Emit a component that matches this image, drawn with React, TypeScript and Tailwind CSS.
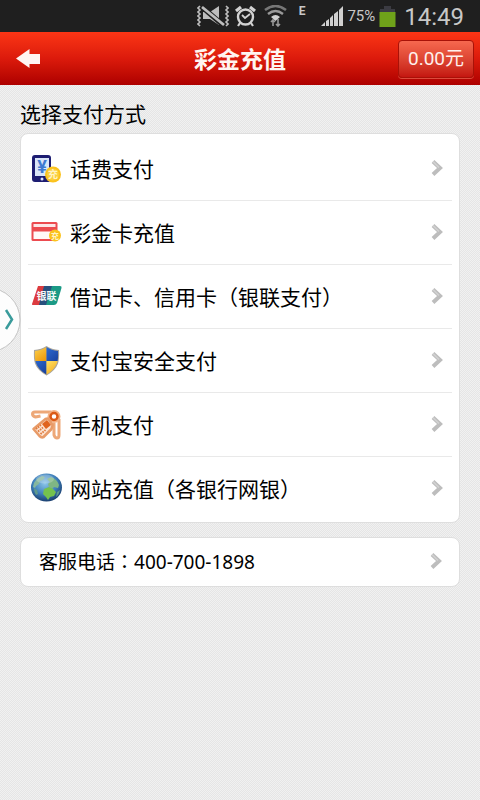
import type { ReactNode } from "react";

const sans = "font-['Roboto','Noto_Sans_CJK_SC',sans-serif]";

function MuteIcon() {
  return (
    <svg width="32" height="22" viewBox="0 0 32 22" fill="none" aria-hidden="true">
      <path d="M3 1l-2 2 2 2-2 2 2 2-2 2 2 2-2 2 2 2-2 2 2 2M29 1l2 2-2 2 2 2-2 2 2 2-2 2 2 2-2 2 2 2-2 2" stroke="#bdbdbd" strokeWidth="1.6" />
      <path d="M6 7h7l9-6v19l-9-6H6z" fill="#bdbdbd" />
      <path d="M5 2l21 18" stroke="#1f1f1f" strokeWidth="5" />
      <path d="M5 2l22 18" stroke="#bdbdbd" strokeWidth="2.8" />
    </svg>
  );
}

function AlarmIcon() {
  return (
    <svg width="21" height="22" viewBox="0 0 21 22" fill="none" stroke="#d2d2d2" aria-hidden="true">
      <circle cx="10.500" cy="12" r="7.500" strokeWidth="2.400" />
      <path d="M7 10l3 3 5-4" strokeWidth="1.800" />
      <path d="M1 6l5-4M20 6l-5-4" strokeWidth="3.200" />
      <path d="M5 18l-2 3M16 18l2 3" strokeWidth="2.200" />
    </svg>
  );
}

function WifiIcon() {
  return (
    <svg width="23" height="22" viewBox="0 0 23 22" fill="none" aria-hidden="true">
      <path d="M1 5q10.500-8 21 0" stroke="#777" strokeWidth="2.600" />
      <path d="M4 9q7.500-6 15 0" stroke="#999" strokeWidth="2.400" />
      <path d="M7 12q4.500-4 9 0l-4.500 4z" fill="#d0d0d0" />
      <path d="M9 21v-6M7 17l2-2 2 2M14 14v7M12 19l2 2 2-2" stroke="#999" strokeWidth="1.600" />
    </svg>
  );
}

function SignalIcon() {
  return (
    <svg width="22" height="20" viewBox="0 0 22 20" fill="#d0d0d0" aria-hidden="true">
      <path d="M0 20l4-4v4zM5 15l3-2v7H5zM9 12l3-3v11H9zM13 8l4-3v15h-4zM18 4l4-4v20h-4z" />
    </svg>
  );
}

function BatteryIcon() {
  return (
    <svg width="17" height="23" viewBox="0 0 17 23" aria-hidden="true">
      <path d="M5 1h7v3h4v3H1V4h4z" fill="#3b3b42" />
      <path d="M0.500 7h16v15h-16z" fill="#6fa21a" />
    </svg>
  );
}

function Chevron() {
  return (
    <svg width="14" height="18" viewBox="0 0 14 18" fill="none" className="shrink-0" aria-hidden="true">
      <path d="M3 1.500l7 6.500-7 6.500" stroke="#bdbdbd" strokeWidth="4" />
      <path d="M3 1.500l6 6" stroke="#d2d2d2" strokeWidth="1.500" />
    </svg>
  );
}

function PhoneYuanIcon() {
  return (
    <svg width="32" height="32" viewBox="0 0 32 32" aria-hidden="true">
      <rect x="1" y="2" width="19" height="27" rx="3" fill="#1d1d72" />
      <rect x="4" y="5" width="14" height="18" fill="#d9e5f8" />
      <text x="11" y="20" textAnchor="middle" fontSize="18" fontWeight="700" fill="#3f79d0">¥</text>
      <circle cx="11" cy="26" r="1.500" fill="#dfe4ff" />
      <circle cx="22" cy="21.500" r="8" fill="#fbc21d" />
      <circle cx="22" cy="21.500" r="6" fill="#fccf3c" />
      <text x="22" y="25" textAnchor="middle" fontSize="10" fontWeight="700" fill="#fff3c4">充</text>
    </svg>
  );
}

function CardIcon() {
  return (
    <svg width="32" height="32" viewBox="0 0 32 32" aria-hidden="true">
      <rect x="0.500" y="5" width="26" height="19" rx="1.500" fill="#ec4b50" />
      <rect x="2.500" y="7" width="22" height="3" fill="#fde7e7" />
      <rect x="2.500" y="14.500" width="22" height="7.500" fill="#fff8f8" />
      <circle cx="24" cy="18.500" r="6" fill="#fbc21d" />
      <text x="24" y="21.500" textAnchor="middle" fontSize="8" fontWeight="700" fill="#fff3c4">充</text>
    </svg>
  );
}

function UnionPayIcon() {
  return (
    <svg width="32" height="32" viewBox="0 0 32 32" aria-hidden="true">
      <path d="M7 5h12l-5 19H2q-1.500 0-1-1z" fill="#dc3b3f" />
      <path d="M13 5h11l-5 19H8z" fill="#28507e" />
      <path d="M21 5h8q2 0 1.500 2L26 22q-1 2-3 2h-8z" fill="#1b9a86" />
      <text x="15.500" y="19" textAnchor="middle" fontSize="10" fontWeight="700" fill="#f4fafa">银联</text>
    </svg>
  );
}

function ShieldIcon() {
  return (
    <svg width="32" height="32" viewBox="0 0 32 32" aria-hidden="true">
      <defs>
        <linearGradient id="shieldGold" x1="0" y1="0" x2="0.800" y2="1">
          <stop offset="0" stopColor="#ffe164" />
          <stop offset="1" stopColor="#ee9b0c" />
        </linearGradient>
        <linearGradient id="shieldBlue" x1="0" y1="0" x2="1" y2="1">
          <stop offset="0" stopColor="#2f6fd6" />
          <stop offset="1" stopColor="#163a94" />
        </linearGradient>
        <clipPath id="shieldShape">
          <path d="M15.500 2q5 3.500 11.500 4 .500 8-1 12-2.500 7-10.500 11.500Q7.500 25 5 18 3.500 14 4 6q6.500-.500 11.500-4z" />
        </clipPath>
      </defs>
      <path d="M15.500 1q5 3.500 12.500 4 .500 9-1 13.500-2.500 7-11.500 12Q6.500 25.500 4 18.500 2.500 14 3 5q7.500-.500 12.500-4z" fill="#a9a59c" />
      <g clipPath="url(#shieldShape)">
        <path d="M0 0h15.500v16H0z" fill="url(#shieldGold)" />
        <path d="M15.500 0H32v16H15.500z" fill="url(#shieldBlue)" />
        <path d="M0 16h15.500v16H0z" fill="url(#shieldBlue)" />
        <path d="M15.500 16H32v16H15.500z" fill="url(#shieldGold)" />
      </g>
    </svg>
  );
}

function MobilePayIcon() {
  return (
    <svg width="32" height="32" viewBox="0 0 32 32" fill="none" aria-hidden="true">
      <path d="M20 3H4Q1.500 3 1.500 5t3 3l5-1" stroke="#eda878" strokeWidth="3" strokeLinejoin="round" />
      <path d="M28 10v16q0 3-2 3t-3-3V14" stroke="#eda878" strokeWidth="3" strokeLinejoin="round" />
      <circle cx="23" cy="7.500" r="6.500" fill="#f3b184" />
      <circle cx="23" cy="7.500" r="3.500" fill="#fff" stroke="#db5a16" strokeWidth="2.500" />
      <path d="M2.500 20l12-10q2-1 3 0l4 6-1 4-8 8q-2 1-4-1z" fill="#fbe3d2" stroke="#e89b68" strokeWidth="2.600" strokeLinejoin="round" />
      <path d="M11 15l5-4 4 5-5 4z" fill="#e0641f" />
      <path d="M5 20l5-4M7 22.500l5-4M9.500 25l5-4" stroke="#e07a3c" strokeWidth="1.800" strokeDasharray="1.600 0.900" />
    </svg>
  );
}

function GlobeIcon() {
  return (
    <svg width="32" height="32" viewBox="0 0 32 32" aria-hidden="true">
      <defs>
        <radialGradient id="ocean" cx="0.450" cy="0.350" r="0.650">
          <stop offset="0" stopColor="#8cc6ea" />
          <stop offset="0.600" stopColor="#3f80ba" />
          <stop offset="1" stopColor="#1a3f70" />
        </radialGradient>
      </defs>
      <ellipse cx="15.500" cy="14.500" rx="15.500" ry="14" fill="url(#ocean)" />
      <path d="M3 10q3-5 8-7l3 1-2 3-3 1-1 3-3 2-1 2-2-1z" fill="#86b79e" />
      <path d="M16 6l4-2q6 2 8 8l-1 3-4-1-2 2-3-2-1-3 2-2z" fill="#7fb684" />
      <path d="M13 16l5-2 4 2 3 3-2 4-4 1-2 3-2-3-3-3z" fill="#74c24e" />
      <path d="M3 15l3 2 1 4-2 1q-2-3-2-7zM26 19l3-2q-1 5-4 7z" fill="#5f9a8c" />
      <ellipse cx="14" cy="6" rx="9" ry="4.500" fill="#fff" opacity="0.220" />
    </svg>
  );
}

const methods: { label: string; icon: ReactNode }[] = [
  { label: "话费支付", icon: <PhoneYuanIcon /> },
  { label: "彩金卡充值", icon: <CardIcon /> },
  { label: "借记卡、信用卡（银联支付）", icon: <UnionPayIcon /> },
  { label: "支付宝安全支付", icon: <ShieldIcon /> },
  { label: "手机支付", icon: <MobilePayIcon /> },
  { label: "网站充值（各银行网银）", icon: <GlobeIcon /> },
];

export default function App() {
  return (
    <div
      className={`${sans} relative min-h-screen bg-[#efefef] bg-[repeating-conic-gradient(#e5e5e5_0_25%,#f1f1f1_0_50%)] bg-[size:2px_2px] text-black`}
    >
      <div className="flex h-8 items-center justify-end bg-[#1f1f1f] pr-4 text-[#c8c8c8]">
        <MuteIcon />
        <span className="ml-1.5 flex"><AlarmIcon /></span>
        <span className="ml-2 flex"><WifiIcon /></span>
        <span className="mr-4 mb-2.5 ml-3 text-xs leading-4 font-bold">E</span>
        <SignalIcon />
        <span className="ml-1 text-[15px]">75%</span>
        <span className="ml-1 flex"><BatteryIcon /></span>
        <span className="ml-2 pt-0.5 text-2xl leading-8">14:49</span>
      </div>

      <header className="grid h-[53px] grid-cols-[1fr_auto_1fr] items-center bg-linear-to-b from-[#fb3515] via-[#dc1a0c] to-[#ad0000] px-1.5">
        <button type="button" aria-label="返回" className="flex h-10 w-11 items-center pl-2.5">
          <svg width="25" height="20" viewBox="0 0 25 20" aria-hidden="true">
            <path d="M0 9.500L13.500 0v5H24v10H13.500v4z" fill="#fff4f2" />
          </svg>
        </button>
        <h1 className="pt-1 text-[23px] leading-8 font-bold text-[#fff4f0]">彩金充值</h1>
        <button
          type="button"
          className="justify-self-end rounded-[4px] border border-[#a81208] bg-linear-to-b from-[#f6684f] to-[#c41510] px-[9px] py-1 text-[19px] leading-7 whitespace-nowrap text-[#fff0ec] shadow-[0_1px_0_#dc4a3c]"
        >
          0.00元
        </button>
      </header>

      <main className="px-5 pt-3">
        <h2 className="pt-0.5 text-[21px] leading-8">选择支付方式</h2>
        <ul className="mt-0.5 rounded-lg border border-[#dedede] bg-white px-[7px] pt-[3px] pb-0.5">
          {methods.map((m) => (
            <li key={m.label} className="border-b border-[#e9e9e9] last:border-b-0">
              <button type="button" className="flex h-[63px] w-full items-center pr-2 pl-[3px] text-left text-[21px]">
                {m.icon}
                <span className="grow pt-1 pl-[7px]">{m.label}</span>
                <Chevron />
              </button>
            </li>
          ))}
        </ul>
        <a
          href="tel:4007001898"
          className="mt-3.5 flex h-[50px] items-center rounded-lg border border-[#dedede] bg-white pr-4 pl-[18px] text-[19px] leading-7"
        >
          <span className="grow">
            客服电话<span className="font-['Noto_Sans_CJK_TC',sans-serif]">：</span>
            <span className="font-['Noto_Sans',sans-serif]">400-700-1898</span>
          </span>
          <Chevron />
        </a>
      </main>

      <button
        type="button"
        aria-label="展开"
        className="absolute top-[288px] left-0 flex h-16 w-[21px] items-center overflow-hidden"
      >
        <svg width="21" height="64" viewBox="0 0 21 64" fill="none" aria-hidden="true">
          <circle cx="-12" cy="32" r="32" fill="#fdfdfd" stroke="#c4c4c4" />
          <path d="M6 22l6 9.500L6 41" stroke="#3a9b9b" strokeWidth="2.500" />
        </svg>
      </button>
    </div>
  );
}
